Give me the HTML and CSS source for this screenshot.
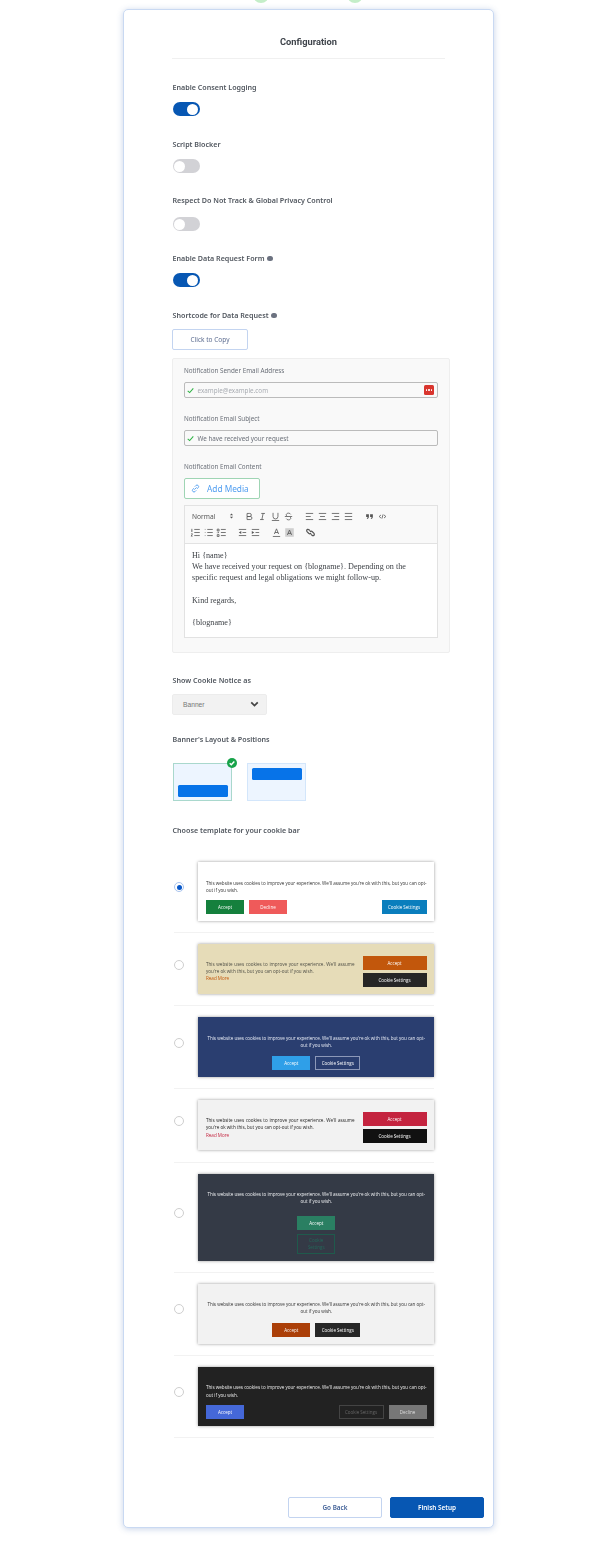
FILE: index.html
```html
<!DOCTYPE html>
<html lang="en">
<head>
<meta charset="utf-8">
<title>Configuration</title>
<link rel="stylesheet" href="styles.css">
</head>
<body>
<svg class="defs" width="0" height="0" aria-hidden="true">
  <symbol id="i-bold" viewBox="0 0 18 18"><path d="M5 4h4.500a2.500 2.500 0 0 1 0 5H5zM5 9h5.500a2.500 2.500 0 0 1 0 5H5z"/></symbol>
  <symbol id="i-italic" viewBox="0 0 18 18"><path d="M7 4h6M5 14h6M8 14l2-10"/></symbol>
  <symbol id="i-underline" viewBox="0 0 18 18"><path d="M5 3v6a4 4 0 0 0 8 0V3M3 15.500h12"/></symbol>
  <symbol id="i-strike" viewBox="0 0 18 18"><path d="M3 9h12M12.500 5.500C12 4.300 10.700 3.500 9 3.500c-2.200 0-3.700 1.200-3.700 2.800 0 1 .5 1.800 1.500 2.300M5.500 12.500c.5 1.200 1.800 2 3.500 2 2.200 0 3.700-1.200 3.700-2.800 0-.7-.2-1.200-.6-1.700"/></symbol>
  <symbol id="i-left" viewBox="0 0 18 18"><path d="M3 4h12M3 9h8M3 14h12"/></symbol>
  <symbol id="i-center" viewBox="0 0 18 18"><path d="M3 4h12M5 9h8M3 14h12"/></symbol>
  <symbol id="i-right" viewBox="0 0 18 18"><path d="M3 4h12M7 9h8M3 14h12"/></symbol>
  <symbol id="i-justify" viewBox="0 0 18 18"><path d="M3 4h12M3 9h12M3 14h12"/></symbol>
  <symbol id="i-quote" viewBox="0 0 18 18"><path class="fill" d="M3.500 5.500h4.500v4c0 2-1.200 3.200-3.200 3.500v-1.500c.9-.2 1.400-.7 1.500-1.500H3.500zM10 5.500h4.500v4c0 2-1.200 3.200-3.200 3.500v-1.500c.9-.2 1.400-.7 1.500-1.500H10z"/></symbol>
  <symbol id="i-code" viewBox="0 0 18 18"><path d="M6.500 6.500 3.500 9l3 2.500M11.500 6.500l3 2.500-3 2.500M10 5.500 8 12.500"/></symbol>
  <symbol id="i-ol" viewBox="0 0 18 18"><path d="M7 4h9M7 9h9M7 14h9M3 3v4M2 7h2M2 11.500C2.500 10.500 4 10.500 4 11.500S2 13.500 2 15h2.200"/></symbol>
  <symbol id="i-ul" viewBox="0 0 18 18"><path d="M7 4h9M7 9h9M7 14h9M3 4h1M3 9h1M3 14h1"/></symbol>
  <symbol id="i-check" viewBox="0 0 18 18"><path d="M8 4h8M8 9h8M8 14h8M2 3.500h3v3H2zM2 12.500h3v3H2zM2 9l1 1 2-2"/></symbol>
  <symbol id="i-outdent" viewBox="0 0 18 18"><path d="M3 4h12M9 9h6M3 14h12"/><path class="fill" d="M7 6.500v5L3 9z"/></symbol>
  <symbol id="i-indent" viewBox="0 0 18 18"><path d="M3 4h12M9 9h6M3 14h12"/><path class="fill" d="M3 6.500v5L7 9z"/></symbol>
  <symbol id="i-color" viewBox="0 0 18 18"><path d="M5.500 11.500 9 3l3.500 8.500M6.500 9h5"/><path d="M3 15.500h12"/></symbol>
  <symbol id="i-bg" viewBox="0 0 18 18"><path class="soft" d="M2 2h14v14H2z"/><path d="M5.500 13 9 5l3.500 8M6.500 10.500h5"/></symbol>
  <symbol id="i-link" viewBox="0 0 18 18"><path class="heavy" d="M8 6 6.500 4.500C5 3.200 3 4 2.800 5.500c-.2 1 .2 1.800.8 2.400L6 10.300c1.300 1.200 3 1 3.800-.3M10 12l1.500 1.500c1.500 1.300 3.500.5 3.700-1 .2-1-.2-1.800-.8-2.400L12 7.700c-1.300-1.200-3-1-3.800.3"/></symbol>
</svg>

<div class="dots"><span class="dot"></span><span class="dot"></span></div>

<main class="card">
  <h1 class="title">Configuration</h1>

  <section class="settings">
    <div class="field">
      <div class="label">Enable Consent Logging</div>
      <span class="toggle on"></span>
    </div>
    <div class="field tight">
      <div class="label">Script Blocker</div>
      <span class="toggle"></span>
    </div>
    <div class="field wide-gap tight">
      <div class="label">Respect Do Not Track &amp; Global Privacy Control</div>
      <span class="toggle"></span>
    </div>
    <div class="field">
      <div class="label">Enable Data Request Form <span class="info"></span></div>
      <span class="toggle on"></span>
    </div>
    <div class="field compact">
      <div class="label">Shortcode for Data Request <span class="info"></span></div>
      <button class="copy">Click to Copy</button>
    </div>

    <div class="panel">
      <div class="panel-label">Notification Sender Email Address</div>
      <div class="input">
        <svg class="tick" viewBox="0 0 10 10"><path d="M1 5.500 3.800 8 9 2"/></svg>
        <span class="placeholder">example@example.com</span>
        <span class="dots-badge"><i></i><i></i><i></i></span>
      </div>
      <div class="panel-label">Notification Email Subject</div>
      <div class="input">
        <svg class="tick" viewBox="0 0 10 10"><path d="M1 5.500 3.800 8 9 2"/></svg>
        <span>We have received your request</span>
      </div>
      <div class="panel-label">Notification Email Content</div>
      <button class="media">
        <svg class="media-icon" viewBox="0 0 12 12"><path d="M5 3.500 6.500 2a2.100 2.100 0 0 1 3 3L8 6.500M7 8.500 5.500 10a2.100 2.100 0 0 1-3-3L4 5.500M4.500 7.500l3-3"/></svg>
        Add Media
      </button>
      <div class="editor">
        <div class="toolbar">
          <div class="tool-row">
            <span class="picker">Normal<svg class="updown" viewBox="0 0 6 10"><path d="M1 4l2-2 2 2zM1 6l2 2 2-2z"/></svg></span>
            <span class="tools"><svg class="tool"><use href="#i-bold"/></svg><svg class="tool"><use href="#i-italic"/></svg><svg class="tool"><use href="#i-underline"/></svg><svg class="tool"><use href="#i-strike"/></svg></span>
            <span class="tools"><svg class="tool"><use href="#i-left"/></svg><svg class="tool"><use href="#i-center"/></svg><svg class="tool"><use href="#i-right"/></svg><svg class="tool"><use href="#i-justify"/></svg></span>
            <span class="tools"><svg class="tool"><use href="#i-quote"/></svg><svg class="tool"><use href="#i-code"/></svg></span>
          </div>
          <div class="tool-row second">
            <span class="tools"><svg class="tool"><use href="#i-ol"/></svg><svg class="tool"><use href="#i-ul"/></svg><svg class="tool"><use href="#i-check"/></svg></span>
            <span class="tools"><svg class="tool"><use href="#i-outdent"/></svg><svg class="tool"><use href="#i-indent"/></svg></span>
            <span class="tools"><svg class="tool"><use href="#i-color"/></svg><svg class="tool"><use href="#i-bg"/></svg></span>
            <span class="tools"><svg class="tool"><use href="#i-link"/></svg></span>
          </div>
        </div>
        <div class="editor-body">
          <p>Hi {name}<br>We have received your request on {blogname}. Depending on the specific request and legal obligations we might follow-up.</p>
          <p>Kind regards,</p>
          <p>{blogname}</p>
        </div>
      </div>
    </div>

    <div class="field notice">
      <div class="label">Show Cookie Notice as</div>
      <div class="select">Banner
        <svg class="chevron" viewBox="0 0 10 7"><path d="M1.200 1.500 5 5.300l3.800-3.800"/></svg>
      </div>
    </div>
    <div class="field layouts">
      <div class="label">Banner's Layout &amp; Positions</div>
      <div class="tiles">
        <div class="tile selected bottom">
          <span class="tile-bar"></span>
          <svg class="tile-check" viewBox="0 0 10 10"><circle cx="5" cy="5" r="5"/><path d="M2.700 5.200 4.300 6.700 7.300 3.500"/></svg>
        </div>
        <div class="tile"><span class="tile-bar"></span></div>
      </div>
    </div>
    <div class="label">Choose template for your cookie bar</div>

    <div class="templates">
      <div class="template">
        <span class="radio checked"></span>
        <div class="preview t1">
          <p class="msg">This website uses cookies to improve your experience. We'll assume you're ok with this, but you can opt-out if you wish.</p>
          <div class="actions">
            <span class="btn accept">Accept</span><span class="btn decline">Decline</span>
            <span class="btn settings-btn push">Cookie Settings</span>
          </div>
        </div>
      </div>
      <div class="template">
        <span class="radio"></span>
        <div class="preview side t2">
          <p class="msg">This website uses cookies to improve your experience. We'll assume you're ok with this, but you can opt-out if you wish.<a class="more">Read More</a></p>
          <div class="stack"><span class="btn accept">Accept</span><span class="btn settings-btn">Cookie Settings</span></div>
        </div>
      </div>
      <div class="template">
        <span class="radio"></span>
        <div class="preview centered t3">
          <p class="msg">This website uses cookies to improve your experience. We'll assume you're ok with this, but you can opt-out if you wish.</p>
          <div class="actions"><span class="btn accept">Accept</span><span class="btn settings-btn">Cookie Settings</span></div>
        </div>
      </div>
      <div class="template">
        <span class="radio"></span>
        <div class="preview side t4">
          <p class="msg">This website uses cookies to improve your experience. We'll assume you're ok with this, but you can opt-out if you wish.<a class="more">Read More</a></p>
          <div class="stack"><span class="btn accept">Accept</span><span class="btn settings-btn">Cookie Settings</span></div>
        </div>
      </div>
      <div class="template">
        <span class="radio"></span>
        <div class="preview centered t5">
          <p class="msg">This website uses cookies to improve your experience. We'll assume you're ok with this, but you can opt-out if you wish.</p>
          <div class="column"><span class="btn accept">Accept</span><span class="btn settings-btn">Cookie<br>Settings</span></div>
        </div>
      </div>
      <div class="template">
        <span class="radio"></span>
        <div class="preview centered t6">
          <p class="msg">This website uses cookies to improve your experience. We'll assume you're ok with this, but you can opt-out if you wish.</p>
          <div class="actions"><span class="btn accept">Accept</span><span class="btn settings-btn">Cookie Settings</span></div>
        </div>
      </div>
      <div class="template">
        <span class="radio"></span>
        <div class="preview t7">
          <p class="msg">This website uses cookies to improve your experience. We'll assume you're ok with this, but you can opt-out if you wish.</p>
          <div class="actions">
            <span class="btn accept">Accept</span>
            <span class="btn settings-btn push">Cookie Settings</span><span class="btn decline">Decline</span>
          </div>
        </div>
      </div>
    </div>
  </section>

  <footer class="footer">
    <button class="nav back">Go Back</button>
    <button class="nav finish">Finish Setup</button>
  </footer>
</main>
</body>
</html>
```

FILE: styles.css
```css
* { box-sizing: border-box; }
html, body { margin: 0; padding: 0; background: #fff; }
body {
  height: 1551px;
  overflow: hidden;
  font-family: "Noto Sans", "Liberation Sans", sans-serif;
  color: #50565e;
}
.defs { position: absolute; }
p { margin: 0; }
button { font-family: inherit; cursor: pointer; }

.dots { height: 8.500px; display: flex; padding-left: 253px; gap: 78px; overflow: hidden; filter: blur(.35px); }
.dot { width: 16px; height: 16px; margin-top: -13.500px; border-radius: 50%; background: #c4eec8; }

.card {
  width: 371px;
  height: 1519px;
  margin-left: 123px;
  padding: 25.500px 9px 8.500px 48px;
  background: #fff;
  border: 1px solid #c9d9f2;
  border-radius: 5px;
  box-shadow: 0 1px 6px rgba(70, 110, 180, .3);
  display: flex;
  flex-direction: column;
  filter: blur(.35px);
}
.title {
  width: 273px;
  margin: 0;
  padding-bottom: 9px;
  border-bottom: 1px solid #f0f0f0;
  font: 700 9.300px/14px Roboto, sans-serif;
  color: #3f444b;
  text-align: center;
}
.settings { padding-top: 23px; flex: 1; }
.field { margin-bottom: 23px; }
.field.tight { margin-bottom: 22px; }
.wide-gap .label { margin-bottom: 12px; }
.compact { margin-bottom: 8px; }
.compact .label { margin-bottom: 9px; }
.label {
  height: 10px;
  margin-bottom: 10px;
  padding-left: .5px;
  font-size: 7.150px;
  line-height: 10px;
  font-weight: 600;
  color: #50565e;
  white-space: nowrap;
}
.info { display: inline-block; width: 5.500px; height: 5.500px; margin-left: 1px; border-radius: 50%; background: #6c7280; }

.toggle {
  display: block;
  width: 27px;
  height: 14px;
  margin-left: .5px;
  border-radius: 7px;
  background: #d2d2d6;
  position: relative;
}
.toggle::after {
  content: "";
  position: absolute;
  top: 1.500px;
  left: 1.500px;
  width: 11px;
  height: 11px;
  border-radius: 50%;
  background: #fff;
}
.toggle.on { background: #0757b3; }
.toggle.on::after { left: 14.500px; }

.copy {
  display: block;
  width: 76px;
  height: 21px;
  padding: 0;
  background: #fff;
  border: 1px solid #c3d4f0;
  border-radius: 2px;
  font-size: 6.500px;
  color: #5d6d90;
}

.panel {
  width: 278px;
  height: 295px;
  margin-bottom: 22px;
  padding: 7px 11px 0;
  background: #f9f9f9;
  border: 1px solid #eeeeee;
  border-radius: 2px;
}
.panel-label { height: 10px; font-size: 6.300px; line-height: 10px; color: #6b7079; margin-bottom: 6px; }
.input {
  display: flex;
  align-items: center;
  width: 254px;
  height: 16px;
  margin-bottom: 16px;
  padding: 0 3px 0 2px;
  background: #f9f9f9;
  border: 1px solid #bbbbbb;
  border-radius: 2px;
  font-size: 6.300px;
  color: #6b7079;
}
.tick { width: 7px; height: 7px; margin-right: 3.500px; fill: none; stroke: #2fb344; stroke-width: 1.500; }
.placeholder { color: #a9adb3; flex: 1; }
.dots-badge {
  display: flex;
  align-items: center;
  justify-content: center;
  gap: 1px;
  width: 10px;
  height: 10px;
  background: #d9352e;
  border-radius: 1.500px;
}
.dots-badge i { width: 1.500px; height: 1.500px; background: #fff; border-radius: 50%; }
.media {
  display: flex;
  align-items: center;
  width: 76px;
  height: 21px;
  margin: 0 0 6px;
  padding: 0 0 0 6px;
  background: #fff;
  border: 1px solid #9fd5b4;
  border-radius: 2px;
  font-size: 8.300px;
  color: #4f9df0;
}
.media-icon { width: 9px; height: 9px; margin-right: 7px; fill: none; stroke: #4f9df0; stroke-width: 1.200; }

.editor { width: 254px; background: #fff; border: 1px solid #e2e2e2; }
.toolbar { height: 38px; padding: 2px 0 0 7px; background: #f9f9f9; border-bottom: 1px solid #e2e2e2; }
.tool-row { display: flex; height: 16px; align-items: center; }
.tool-row.second { margin-left: -3px; }
.picker { display: flex; align-items: center; width: 50.500px; font-size: 6.600px; color: #555; }
.updown { width: 5px; height: 8px; margin-left: 14px; fill: #555; }
.tools { display: flex; margin-right: 8px; }
.tool { width: 13px; height: 11px; fill: none; stroke: #555; stroke-width: 1.300; }
.fill { fill: #555; stroke: none; }
.soft { fill: #cfcfcf; stroke: none; }
.heavy { stroke-width: 2; }
.editor-body { padding: 5.500px 7px 0; font: 8.150px/11.300px "Liberation Serif", Georgia, serif; color: #3e4247; height: 93px; }
.editor-body p { margin-bottom: 11.300px; }

.notice { margin-bottom: 19px; }
.notice .label { margin-bottom: 9px; }
.select {
  position: relative;
  width: 95px;
  height: 21px;
  padding-left: 10px;
  background: #f2f2f2;
  border: 1px solid #ececec;
  border-radius: 2px;
  font: 6.700px/19px "Liberation Sans", sans-serif;
  color: #777;
}
.chevron { position: absolute; right: 7px; top: 6px; width: 9px; height: 6px; fill: none; stroke: #444; stroke-width: 2; }

.layouts { margin-bottom: 24px; }
.layouts .label { margin-bottom: 19px; }
.tiles { display: flex; gap: 15px; padding-left: 1px; }
.tile {
  position: relative;
  display: flex;
  width: 59px;
  height: 38px;
  padding: 3.500px;
  background: #edf5ff;
  border: 1px solid #d3e6fb;
}
.tile.selected { border-color: #a9d8cd; }
.tile.bottom { align-items: flex-end; }
.tile-bar { flex: 1; height: 12px; background: #0773e8; border-radius: 1.500px; }
.tile-check { position: absolute; top: -6px; right: -6px; width: 10px; height: 10px; }
.tile-check circle { fill: #18a34a; }
.tile-check path { fill: none; stroke: #fff; stroke-width: 1.500; }

.templates { padding-top: 6px; }
.template {
  display: flex;
  align-items: center;
  width: 260px;
  margin-left: 2px;
  padding: 11.100px 0;
  border-bottom: 1px solid #f2f2f2;
}
.radio {
  flex: none;
  width: 10px;
  height: 10px;
  margin: 0 14px 9px 0;
  border: 1px solid #cfcfcf;
  border-radius: 50%;
  background: #fff;
  position: relative;
}
.radio.checked { border-color: #a9c4ee; }
.radio.checked::after {
  content: "";
  position: absolute;
  inset: 1.500px;
  border-radius: 50%;
  background: #0757c9;
}

.preview {
  width: 236px;
  padding: 17.500px 7.500px 7px 8px;
  box-shadow: 0 0 3px rgba(0, 0, 0, .4);
  font-family: "Open Sans", "Noto Sans", sans-serif;
  font-size: 4.550px;
  line-height: 7.200px;
}
.msg { margin-bottom: 6px; }
.t1 .msg, .t7 .msg { margin-right: -2px; }
.actions { display: flex; gap: 5px; }
.push { margin-left: auto; }
.btn {
  display: block;
  width: 38px;
  height: 14px;
  text-align: center;
  font-size: 4.500px;
  line-height: 14px;
  color: #fff;
  flex: none;
}
.settings-btn { width: 45px; }
.side { display: flex; align-items: center; gap: 8px; padding: 12px 7.500px 7px 8px; }
.side .msg { flex: 1; margin: 0; text-align: justify; }
.more { display: block; text-align: left; }
.stack { display: flex; flex-direction: column; gap: 3px; flex: none; }
.stack .btn { width: 64px; }
.centered .msg { text-align: center; margin: 0 -2px 7px; letter-spacing: -.03px; }
.centered .actions { justify-content: center; }
.column { display: flex; flex-direction: column; align-items: center; gap: 4px; }

.t1 { background: #fff; color: #333; }
.t1 .accept { background: #15803d; }
.t1 .decline { background: #ef5a5a; }
.t1 .settings-btn { background: #0a7ebd; }
.t2 { background: #e6dcb8; color: #4c4c44; }
.t2 .more { color: #c2570c; }
.t2 .accept { background: #c2570c; }
.t2 .settings-btn { background: #262626; }
.t3 { background: #2a3e70; color: #e8ecf5; }
.t3 .accept { background: #2f9fe8; }
.t3 .settings-btn { border: 1px solid #8c98b8; line-height: 12px; }
.t4 { background: #f2f2f2; color: #222; }
.t4 .more { color: #c4243f; }
.t4 .accept { background: #c4243f; }
.t4 .settings-btn { background: #111; }
.t5 { background: #343a46; color: #eef0f2; }
.t5 .msg { margin-bottom: 10px; }
.t5 .accept { background: #2a7f62; }
.t5 .settings-btn { width: 38px; height: 20px; border: 1px solid #1f5a4c; color: #23695a; line-height: 7.200px; padding-top: 2px; }
.t6 { background: #f2f2f2; color: #333; }
.t6 .accept { background: #ab3f08; }
.t6 .settings-btn { background: #262626; }
.t7 { background: #222; color: #ececec; }
.t7 .accept { background: #4568d8; }
.t7 .settings-btn { border: 1px solid #444; color: #666; line-height: 12px; }
.t7 .decline { background: #777; color: #ddd; }

.footer { display: flex; justify-content: flex-end; gap: 8px; }
.nav {
  width: 94px;
  height: 21px;
  padding: 0;
  border-radius: 2px;
  font-size: 6.400px;
  font-weight: 600;
}
.back { background: #fff; border: 1px solid #c3d4f0; color: #3f5f96; }
.finish { background: #0757b3; border: 1px solid #0757b3; color: #fff; }
```
